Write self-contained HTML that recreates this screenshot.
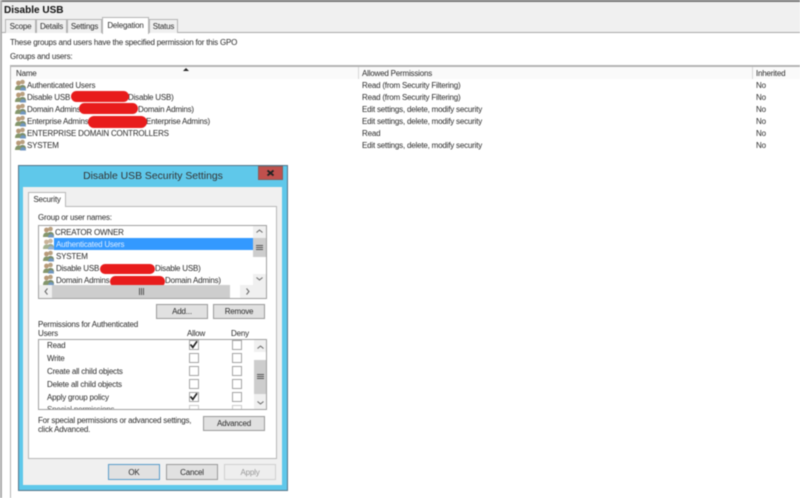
<!DOCTYPE html>
<html><head><meta charset="utf-8">
<style>
html,body{margin:0;padding:0;background:#fff}
#p{position:relative;width:800px;height:498px;overflow:hidden;background:#fff;font:8px/12px "Liberation Sans",sans-serif;letter-spacing:-.2px;color:#2a2a2a;filter:blur(.4px)}
#p div,#p span.t{position:absolute;white-space:nowrap;box-sizing:border-box}
.t{position:absolute;white-space:nowrap;transform:translateY(1px)}
.tab{background:#f0f0f0;border:1px solid #b4b4b4;border-bottom:none;text-align:center;line-height:13px}
.btn{background:#e1e1e1;border:1px solid #9a9a9a;text-align:center;line-height:14px}
.cb{width:10px;height:10px;border:1px solid #a5a5a5;background:#fff}
.sb{background:#f0f0f0}
.th{background:#cdcdcd}
svg{position:absolute;overflow:visible}
</style></head><body>
<div id="p">
<svg width="0" height="0"><defs>
<g id="u"><circle cx="7.500" cy="3" r="2.300" fill="#b8a080"/><path d="M4 10c0-3 1.500-4 3.500-4s3.500 1 3.500 4z" fill="#7a8c68"/><circle cx="3.500" cy="4" r="2.400" fill="#b89a78"/><path d="M0 11c0-3 1.500-4.500 3.500-4.500S7 8 7 11z" fill="#84966c"/><path d="M5 11.500c0-2 1.500-3.500 3-3.500s3 1.500 3 3.500z" fill="#7096c0"/></g>
<g id="ck"><path d="M1.500 4.500l2.300 2.800 4.200-6" fill="none" stroke="#222" stroke-width="1.700"/></g>
</defs></svg>

<!-- top header -->
<div style="left:0;top:0;width:800px;height:2px;background:#777"></div>
<div style="left:0;top:0;width:2px;height:498px;background:#aaa"></div>
<div style="left:2px;top:2px;width:798px;height:31px;background:#f0f0f0;border-bottom:1px solid #a9a9a9"></div>
<span class="t" style="left:4px;top:4px;font:bold 10px/12px 'Liberation Sans',sans-serif;letter-spacing:0;color:#111">Disable USB</span>
<div class="tab" style="left:5px;top:19px;width:31px;height:14px">Scope</div>
<div class="tab" style="left:36px;top:19px;width:31px;height:14px">Details</div>
<div class="tab" style="left:67px;top:19px;width:35px;height:14px">Settings</div>
<div class="tab" style="left:102px;top:17px;width:47px;height:17px;background:#fff;line-height:15px">Delegation</div>
<div class="tab" style="left:149px;top:19px;width:29px;height:14px">Status</div>

<span class="t" style="left:10px;top:36px">These groups and users have the specified permission for this GPO</span>
<span class="t" style="left:10px;top:50px">Groups and users:</span>

<!-- main list -->
<div style="left:10px;top:65px;width:800px;height:440px;border:1px solid #b4b4b4;border-right:none;border-top:2px solid #b4b4b4;background:#fff"></div>
<div style="left:11px;top:67px;width:789px;height:12px;background:#fafafa"></div>
<div style="left:358px;top:67px;width:1px;height:12px;background:#d8d8d8"></div>
<div style="left:752px;top:67px;width:1px;height:12px;background:#d8d8d8"></div>
<span class="t" style="left:16px;top:67px">Name</span>
<svg style="left:183px;top:68px" width="6" height="3"><path d="M3 0L6 3H0z" fill="#222"/></svg>
<span class="t" style="left:362px;top:67px">Allowed Permissions</span>
<span class="t" style="left:756px;top:67px">Inherited</span>

<svg style="left:15px;top:79px" width="12" height="12"><use href="#u"/></svg>
<svg style="left:15px;top:91px" width="12" height="12"><use href="#u"/></svg>
<svg style="left:15px;top:103px" width="12" height="12"><use href="#u"/></svg>
<svg style="left:15px;top:115px" width="12" height="12"><use href="#u"/></svg>
<svg style="left:15px;top:127px" width="12" height="12"><use href="#u"/></svg>
<svg style="left:15px;top:139px" width="12" height="12"><use href="#u"/></svg>

<span class="t" style="left:27px;top:79px">Authenticated Users</span>
<span class="t" style="left:27px;top:91px">Disable USB</span><span class="t" style="left:128px;top:91px">Disable USB)</span>
<span class="t" style="left:27px;top:103px">Domain Admins</span><span class="t" style="left:138px;top:103px">Domain Admins)</span>
<span class="t" style="left:27px;top:115px">Enterprise Admins</span><span class="t" style="left:146px;top:115px">Enterprise Admins)</span>
<span class="t" style="left:27px;top:127px">ENTERPRISE DOMAIN CONTROLLERS</span>
<span class="t" style="left:27px;top:139px">SYSTEM</span>

<div style="left:71px;top:91px;width:58px;height:11px;background:#e81c1c;border-radius:6px"></div>
<div style="left:79px;top:103px;width:59px;height:11px;background:#e81c1c;border-radius:6px"></div>
<div style="left:88px;top:116px;width:59px;height:12px;background:#e81c1c;border-radius:6px"></div>

<span class="t" style="left:362px;top:79px">Read (from Security Filtering)</span>
<span class="t" style="left:362px;top:91px">Read (from Security Filtering)</span>
<span class="t" style="left:362px;top:103px">Edit settings, delete, modify security</span>
<span class="t" style="left:362px;top:115px">Edit settings, delete, modify security</span>
<span class="t" style="left:362px;top:127px">Read</span>
<span class="t" style="left:362px;top:139px">Edit settings, delete, modify security</span>
<span class="t" style="left:756px;top:79px">No</span>
<span class="t" style="left:756px;top:91px">No</span>
<span class="t" style="left:756px;top:103px">No</span>
<span class="t" style="left:756px;top:115px">No</span>
<span class="t" style="left:756px;top:127px">No</span>
<span class="t" style="left:756px;top:139px">No</span>

<!-- dialog -->
<div style="left:18px;top:165px;width:270px;height:326px;background:#5fc8ea;border:1px solid #55758a"></div>
<span class="t" style="left:18px;top:169px;width:270px;text-align:center;font-size:10.400px;letter-spacing:0;line-height:14px;color:#333">Disable USB Security Settings</span>
<div style="left:258px;top:166px;width:25px;height:14px;background:#c0504d;border:1px solid #8f5a55"></div>
<svg style="left:267px;top:170px" width="7" height="6"><path d="M.5 .5L6.500 5.500M6.500 .5L.5 5.500" stroke="#222" stroke-width="1.800"/></svg>

<div style="left:23px;top:187px;width:259px;height:298px;background:#f0f0f0"></div>
<div style="left:28px;top:206px;width:249px;height:253px;background:#fff;border:1px solid #b8b8b8"></div>
<div style="left:28px;top:192px;width:38px;height:15px;background:#fff;border:1px solid #b8b8b8;border-bottom:none;text-align:center;line-height:14px">Security</div>

<span class="t" style="left:38px;top:211px">Group or user names:</span>

<div style="left:38px;top:225px;width:229px;height:74px;border:1px solid #a0a0a0;background:#fff"></div>
<div style="left:54px;top:238px;width:199px;height:12px;background:#3399ff"></div>
<svg style="left:43px;top:226px" width="12" height="12"><use href="#u"/></svg>
<svg style="left:43px;top:238px;opacity:.75" width="12" height="12"><use href="#u"/></svg>
<svg style="left:43px;top:250px" width="12" height="12"><use href="#u"/></svg>
<svg style="left:43px;top:262px" width="12" height="12"><use href="#u"/></svg>
<svg style="left:43px;top:274px" width="12" height="12"><use href="#u"/></svg>
<span class="t" style="left:55px;top:226px">CREATOR OWNER</span>
<span class="t" style="left:56px;top:238px;color:#dcecff">Authenticated Users</span>
<span class="t" style="left:56px;top:250px">SYSTEM</span>
<span class="t" style="left:56px;top:262px">Disable USB</span><span class="t" style="left:155px;top:262px">Disable USB)</span>
<span class="t" style="left:56px;top:274px">Domain Admins</span><span class="t" style="left:165px;top:274px">Domain Admins)</span>
<div style="left:100px;top:264px;width:55px;height:10px;background:#e81c1c;border-radius:6px"></div>
<div style="left:110px;top:276px;width:55px;height:11px;background:#e81c1c;border-radius:6px"></div>

<div class="sb" style="left:253px;top:226px;width:13px;height:59px"></div>
<div style="left:253px;top:253px;width:13px;height:21px;background:#fff"></div>
<div class="th" style="left:253px;top:238px;width:13px;height:19px"></div>
<svg style="left:256px;top:229px" width="7" height="4"><path d="M.5 3.500L3.500 1l3 2.500" fill="none" stroke="#666"/></svg>
<svg style="left:256px;top:277px" width="7" height="4"><path d="M.5 .5L3.500 3l3-2.500" fill="none" stroke="#666"/></svg>
<svg style="left:256px;top:245px" width="7" height="5"><path d="M0 .5H7M0 2.500H7M0 4.500H7" stroke="#555"/></svg>
<div class="sb" style="left:39px;top:285px;width:227px;height:13px"></div>
<div class="th" style="left:52px;top:285px;width:178px;height:13px"></div>
<div style="left:230px;top:285px;width:10px;height:13px;background:#fff"></div>
<svg style="left:44px;top:288px" width="4" height="7"><path d="M3.500 .5L1 3.500l2.500 3" fill="none" stroke="#666"/></svg>
<svg style="left:246px;top:288px" width="4" height="7"><path d="M.5 .5L3 3.500l-2.500 3" fill="none" stroke="#666"/></svg>
<svg style="left:139px;top:288px" width="5" height="7"><path d="M.5 0V7M2.500 0V7M4.500 0V7" stroke="#555"/></svg>

<div class="btn" style="left:156px;top:304px;width:52px;height:15px">Add...</div>
<div class="btn" style="left:213px;top:304px;width:52px;height:15px">Remove</div>

<span class="t" style="left:38px;top:318px">Permissions for Authenticated</span>
<span class="t" style="left:38px;top:327px">Users</span>
<span class="t" style="left:187px;top:327px">Allow</span>
<span class="t" style="left:231px;top:327px">Deny</span>

<div style="left:38px;top:339px;width:229px;height:71px;border:1px solid #a0a0a0;background:#fff;overflow:hidden"></div>
<span class="t" style="left:47px;top:339px">Read</span>
<span class="t" style="left:47px;top:352px">Write</span>
<span class="t" style="left:47px;top:365px">Create all child objects</span>
<span class="t" style="left:47px;top:378px">Delete all child objects</span>
<span class="t" style="left:47px;top:391px">Apply group policy</span>
<div style="left:47px;top:404px;height:5px;overflow:hidden;line-height:12px;color:#555">Special permissions</div>

<div class="cb" style="left:189px;top:340px"></div><svg style="left:189px;top:340px" width="10" height="10"><use href="#ck"/></svg>
<div class="cb" style="left:189px;top:353px"></div>
<div class="cb" style="left:189px;top:366px"></div>
<div class="cb" style="left:189px;top:379px"></div>
<div class="cb" style="left:189px;top:392px"></div><svg style="left:189px;top:392px" width="10" height="10"><use href="#ck"/></svg>
<div style="left:189px;top:405px;width:10px;height:4px;border:1px solid #ccc;border-bottom:none"></div>
<div class="cb" style="left:232px;top:340px"></div>
<div class="cb" style="left:232px;top:353px"></div>
<div class="cb" style="left:232px;top:366px"></div>
<div class="cb" style="left:232px;top:379px"></div>
<div class="cb" style="left:232px;top:392px"></div>
<div style="left:232px;top:405px;width:10px;height:4px;border:1px solid #ccc;border-bottom:none"></div>

<div class="sb" style="left:254px;top:340px;width:12px;height:69px"></div>
<div style="left:254px;top:352px;width:12px;height:8px;background:#fff"></div>
<div class="th" style="left:254px;top:360px;width:12px;height:34px"></div>
<svg style="left:257px;top:345px" width="7" height="4"><path d="M.5 3.500L3.500 1l3 2.500" fill="none" stroke="#666"/></svg>
<svg style="left:257px;top:401px" width="7" height="4"><path d="M.5 .5L3.500 3l3-2.500" fill="none" stroke="#666"/></svg>
<svg style="left:257px;top:374px" width="7" height="5"><path d="M0 .5H7M0 2.500H7M0 4.500H7" stroke="#555"/></svg>

<span class="t" style="left:38px;top:414px">For special permissions or advanced settings,</span>
<span class="t" style="left:38px;top:423px">click Advanced.</span>
<div class="btn" style="left:203px;top:416px;width:62px;height:15px">Advanced</div>

<div class="btn" style="left:108px;top:464px;width:52px;height:16px;border-color:#5a9cc8;line-height:15px">OK</div>
<div class="btn" style="left:166px;top:464px;width:52px;height:16px;line-height:15px">Cancel</div>
<div class="btn" style="left:224px;top:464px;width:52px;height:16px;line-height:15px;background:#eee;border-color:#d0d0d0;color:#999">Apply</div>
</div>
</body></html>
